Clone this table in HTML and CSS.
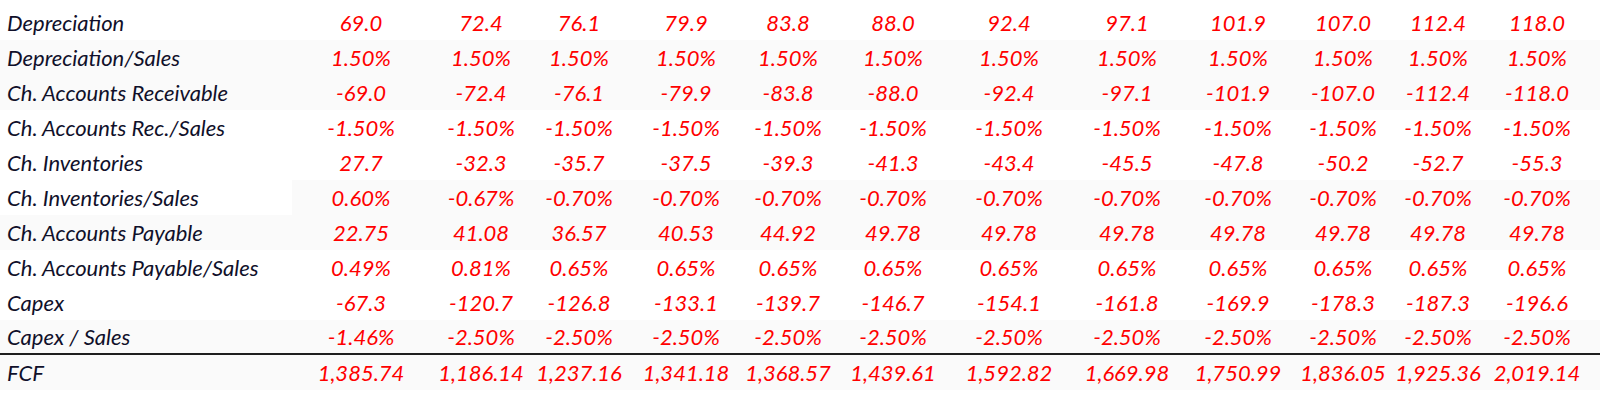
FILE: index.html
```html
<!DOCTYPE html>
<html>
<head>
<meta charset="utf-8">
<link rel="stylesheet" href="styles.css">
</head>
<body>
<div class="sheet">
  <div class="row">
    <div class="label">Depreciation</div>
    <div class="val">69.0</div><div class="val">72.4</div><div class="val">76.1</div><div class="val">79.9</div><div class="val">83.8</div><div class="val">88.0</div><div class="val">92.4</div><div class="val">97.1</div><div class="val">101.9</div><div class="val">107.0</div><div class="val">112.4</div><div class="val">118.0</div>
  </div>
  <div class="row shade">
    <div class="label">Depreciation/Sales</div>
    <div class="val">1.50%</div><div class="val">1.50%</div><div class="val">1.50%</div><div class="val">1.50%</div><div class="val">1.50%</div><div class="val">1.50%</div><div class="val">1.50%</div><div class="val">1.50%</div><div class="val">1.50%</div><div class="val">1.50%</div><div class="val">1.50%</div><div class="val">1.50%</div>
  </div>
  <div class="row shade">
    <div class="label">Ch. Accounts Receivable</div>
    <div class="val">-69.0</div><div class="val">-72.4</div><div class="val">-76.1</div><div class="val">-79.9</div><div class="val">-83.8</div><div class="val">-88.0</div><div class="val">-92.4</div><div class="val">-97.1</div><div class="val">-101.9</div><div class="val">-107.0</div><div class="val">-112.4</div><div class="val">-118.0</div>
  </div>
  <div class="row">
    <div class="label">Ch. Accounts Rec./Sales</div>
    <div class="val">-1.50%</div><div class="val">-1.50%</div><div class="val">-1.50%</div><div class="val">-1.50%</div><div class="val">-1.50%</div><div class="val">-1.50%</div><div class="val">-1.50%</div><div class="val">-1.50%</div><div class="val">-1.50%</div><div class="val">-1.50%</div><div class="val">-1.50%</div><div class="val">-1.50%</div>
  </div>
  <div class="row">
    <div class="label">Ch. Inventories</div>
    <div class="val">27.7</div><div class="val">-32.3</div><div class="val">-35.7</div><div class="val">-37.5</div><div class="val">-39.3</div><div class="val">-41.3</div><div class="val">-43.4</div><div class="val">-45.5</div><div class="val">-47.8</div><div class="val">-50.2</div><div class="val">-52.7</div><div class="val">-55.3</div>
  </div>
  <div class="row shade">
    <div class="label plain">Ch. Inventories/Sales</div>
    <div class="val">0.60%</div><div class="val">-0.67%</div><div class="val">-0.70%</div><div class="val">-0.70%</div><div class="val">-0.70%</div><div class="val">-0.70%</div><div class="val">-0.70%</div><div class="val">-0.70%</div><div class="val">-0.70%</div><div class="val">-0.70%</div><div class="val">-0.70%</div><div class="val">-0.70%</div>
  </div>
  <div class="row shade">
    <div class="label">Ch. Accounts Payable</div>
    <div class="val">22.75</div><div class="val">41.08</div><div class="val">36.57</div><div class="val">40.53</div><div class="val">44.92</div><div class="val">49.78</div><div class="val">49.78</div><div class="val">49.78</div><div class="val">49.78</div><div class="val">49.78</div><div class="val">49.78</div><div class="val">49.78</div>
  </div>
  <div class="row">
    <div class="label">Ch. Accounts Payable/Sales</div>
    <div class="val">0.49%</div><div class="val">0.81%</div><div class="val">0.65%</div><div class="val">0.65%</div><div class="val">0.65%</div><div class="val">0.65%</div><div class="val">0.65%</div><div class="val">0.65%</div><div class="val">0.65%</div><div class="val">0.65%</div><div class="val">0.65%</div><div class="val">0.65%</div>
  </div>
  <div class="row">
    <div class="label">Capex</div>
    <div class="val">-67.3</div><div class="val">-120.7</div><div class="val">-126.8</div><div class="val">-133.1</div><div class="val">-139.7</div><div class="val">-146.7</div><div class="val">-154.1</div><div class="val">-161.8</div><div class="val">-169.9</div><div class="val">-178.3</div><div class="val">-187.3</div><div class="val">-196.6</div>
  </div>
  <div class="row shade total-above">
    <div class="label">Capex / Sales</div>
    <div class="val">-1.46%</div><div class="val">-2.50%</div><div class="val">-2.50%</div><div class="val">-2.50%</div><div class="val">-2.50%</div><div class="val">-2.50%</div><div class="val">-2.50%</div><div class="val">-2.50%</div><div class="val">-2.50%</div><div class="val">-2.50%</div><div class="val">-2.50%</div><div class="val">-2.50%</div>
  </div>
  <div class="row shade">
    <div class="label">FCF</div>
    <div class="val">1,385.74</div><div class="val">1,186.14</div><div class="val">1,237.16</div><div class="val">1,341.18</div><div class="val">1,368.57</div><div class="val">1,439.61</div><div class="val">1,592.82</div><div class="val">1,669.98</div><div class="val">1,750.99</div><div class="val">1,836.05</div><div class="val">1,925.36</div><div class="val">2,019.14</div>
  </div>
</div>
</body>
</html>
```

FILE: styles.css
```css
html, body {
  margin: 0;
  padding: 0;
  background: #ffffff;
}

.sheet {
  padding-top: 5px;
  font-family: Lato, "Liberation Sans", sans-serif;
  font-style: italic;
  font-size: 22px;
  width: 1600px;
}

.row {
  display: grid;
  grid-template-columns: 292px 138px 102px 94px 120px 84px 126px 106px 130px 92px 118px 72px 1fr;
  height: 35px;
  box-sizing: border-box;
  align-items: center;
}

.row.shade {
  background: #fafafa;
}

.row.total-above {
  border-bottom: 2px solid #1e1e1e;
}

.label {
  height: 100%;
  display: flex;
  align-items: center;
  padding-left: 7px;
  color: #10102a;
  white-space: nowrap;
}

.label.plain {
  background: #ffffff;
}

.val {
  display: flex;
  justify-content: center;
  color: #ff0000;
  white-space: nowrap;
}
```
